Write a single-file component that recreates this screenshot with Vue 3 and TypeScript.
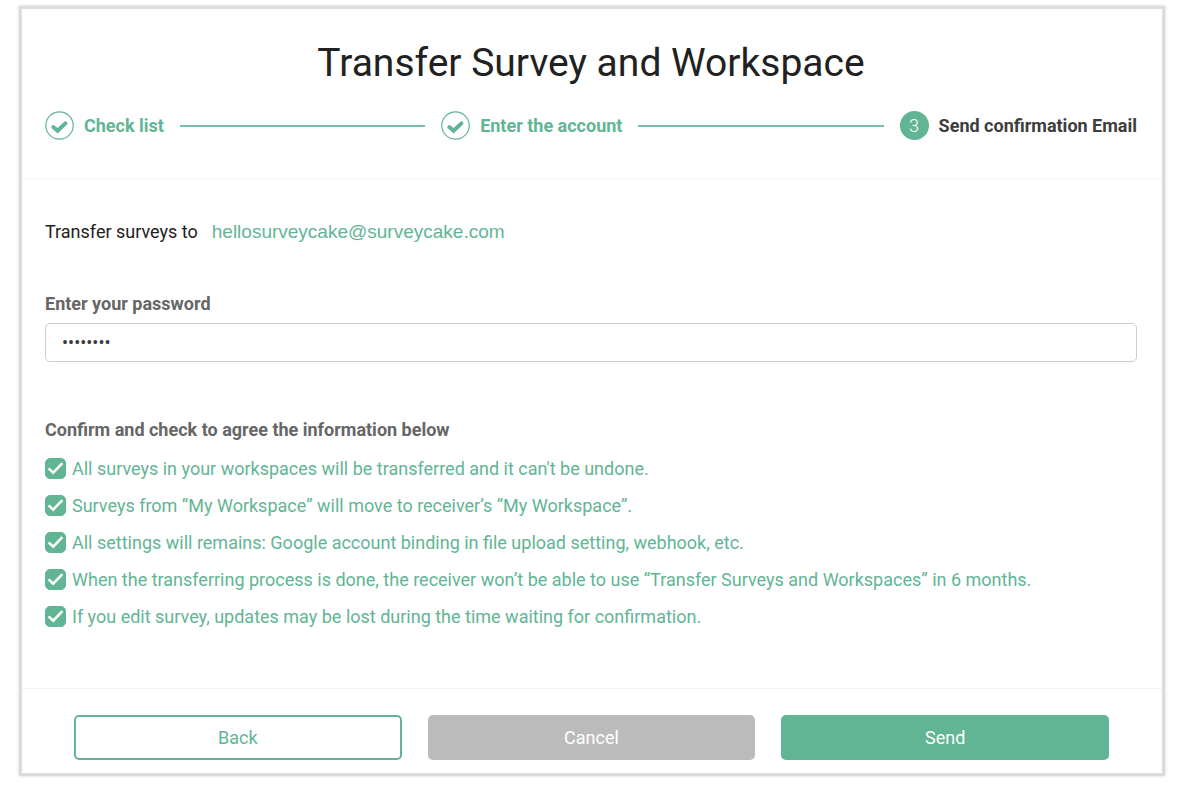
<script setup lang="ts">
import { ref } from 'vue'

interface Agreement {
  id: string
  text: string
  checked: boolean
}

const password = ref('12345678')

const agreements = ref<Agreement[]>([
  { id: 'undone', text: "All surveys in your workspaces will be transferred and it can't be undone.", checked: true },
  { id: 'move', text: 'Surveys from “My Workspace” will move to receiver’s “My Workspace”.', checked: true },
  { id: 'settings', text: 'All settings will remains: Google account binding in file upload setting, webhook, etc.', checked: true },
  { id: 'months', text: 'When the transferring process is done, the receiver won’t be able to use “Transfer Surveys and Workspaces” in 6 months.', checked: true },
  { id: 'lost', text: 'If you edit survey, updates may be lost during the time waiting for confirmation.', checked: true },
])
</script>

<template>
  <div class="page">
    <form class="panel" @submit.prevent>
      <header class="head">
        <h1>Transfer Survey and Workspace</h1>
        <ol class="steps">
          <li class="step done">
            <svg class="mark" viewBox="0 0 29 29" aria-hidden="true">
              <circle cx="14.5" cy="14.5" r="13.7" />
              <path d="M8.3 16 12.6 19.8 20.4 12.4" />
            </svg>
            <span>Check list</span>
          </li>
          <li class="line" aria-hidden="true"></li>
          <li class="step done">
            <svg class="mark" viewBox="0 0 29 29" aria-hidden="true">
              <circle cx="14.5" cy="14.5" r="13.7" />
              <path d="M8.3 16 12.6 19.8 20.4 12.4" />
            </svg>
            <span>Enter the account</span>
          </li>
          <li class="line" aria-hidden="true"></li>
          <li class="step current" aria-current="step">
            <span class="number">3</span>
            <span>Send confirmation Email</span>
          </li>
        </ol>
      </header>

      <main class="body">
        <p class="target">
          <span>Transfer surveys to</span>
          <a href="mailto:hellosurveycake@surveycake.com">hellosurveycake@surveycake.com</a>
        </p>

        <label class="caption" for="password">Enter your password</label>
        <input id="password" v-model="password" class="password" type="password" autocomplete="off" />

        <fieldset class="agree">
          <legend class="caption">Confirm and check to agree the information below</legend>
          <label v-for="item in agreements" :key="item.id" class="row" :for="item.id">
            <span class="box">
              <input :id="item.id" v-model="item.checked" type="checkbox" />
              <svg viewBox="0 0 21 21" aria-hidden="true">
                <path d="M3.6 10.4 8.2 14.6 17.4 5.2" />
              </svg>
            </span>
            <span>{{ item.text }}</span>
          </label>
        </fieldset>
      </main>

      <footer class="foot">
        <button type="button" class="back">Back</button>
        <button type="button" class="cancel">Cancel</button>
        <button type="submit" class="send">Send</button>
      </footer>
    </form>
  </div>
</template>

<style>
body {
  margin: 0;
  background: #fff;
}
</style>

<style scoped>
.page {
  --green: #62b594;
  box-sizing: border-box;
  min-height: 100vh;
  padding: 6px 17px 10px 19px;
  display: flex;
  font-family: Roboto, "Liberation Sans", sans-serif;
  font-size: 18px;
  line-height: 24px;
  color: #212121;
}

.panel {
  flex: 1;
  min-width: 0;
  display: flex;
  flex-direction: column;
  border: 3px solid #dcdcdc;
  box-shadow: 0 0 3px #cfcfcf;
  background: #fff;
}

.head {
  padding: 30px 25px 38px 23px;
  border-bottom: 2px solid #f8f8f8;
}

h1 {
  margin: 0 0 24px;
  font-size: 39px;
  line-height: 48px;
  font-weight: 400;
  text-align: center;
}

.steps {
  margin: 0;
  padding: 0;
  list-style: none;
  display: flex;
  align-items: center;
  gap: 16px;
}

.step {
  display: flex;
  align-items: center;
  gap: 10px;
  font-weight: 700;
  white-space: nowrap;
}

.done {
  color: var(--green);
}

.current {
  color: #3d3d3d;
}

.line {
  flex: 1;
  height: 2px;
  background: #76c0a4;
}

.mark {
  width: 29px;
  height: 29px;
  fill: none;
  stroke: var(--green);
}

.mark circle {
  stroke-width: 1.2;
}

.mark path {
  stroke-width: 4;
  stroke-linecap: round;
}

.number {
  width: 29px;
  height: 29px;
  border-radius: 50%;
  background: var(--green);
  color: #fff;
  font-weight: 300;
  line-height: 30px;
  text-align: center;
}

.body {
  flex: 1;
  padding: 40px 25px 52px 23px;
}

.target {
  margin: 0 0 48px;
  display: flex;
  flex-wrap: wrap;
  gap: 14px;
}

.target a {
  color: var(--green);
  font-family: "Liberation Sans", sans-serif;
  font-size: 19px;
  text-decoration: none;
}

.caption {
  display: block;
  padding: 0;
  font-weight: 700;
  color: #666;
}

.password {
  box-sizing: border-box;
  width: 100%;
  height: 39px;
  margin: 7px 0 56px;
  padding: 0 16px;
  display: block;
  border: 1px solid #ccc;
  border-radius: 5px;
  background: #fff;
  color: #3d3d3d;
  font-family: inherit;
  font-size: 18px;
  outline: none;
}

.agree {
  margin: 0;
  padding: 0;
  border: 0;
  min-width: 0;
}

.agree .caption {
  margin-bottom: 8px;
}

.row {
  min-height: 37px;
  display: flex;
  align-items: center;
  gap: 6px;
  color: var(--green);
}

.box {
  display: grid;
  flex: none;
}

.box input,
.box svg {
  grid-area: 1 / 1;
  width: 21px;
  height: 21px;
  margin: 0;
}

.box input {
  appearance: none;
  box-sizing: border-box;
  border: 1px solid var(--green);
  border-radius: 5px;
}

.box input:checked {
  background: var(--green);
}

.box svg {
  pointer-events: none;
  fill: none;
  stroke: #fff;
  stroke-width: 2.6;
}

.foot {
  display: grid;
  grid-template-columns: repeat(3, 1fr);
  gap: 26px;
  padding: 26px 53px 13px 52px;
  border-top: 1px solid #f2f2f2;
}

button {
  height: 45px;
  padding: 0;
  border: 0;
  border-radius: 5px;
  font-family: inherit;
  font-size: 18px;
  color: #fff;
  cursor: pointer;
}

.back {
  border: 2px solid var(--green);
  background: #fff;
  color: var(--green);
}

.cancel {
  background: #bbb;
}

.send {
  background: var(--green);
}
</style>
